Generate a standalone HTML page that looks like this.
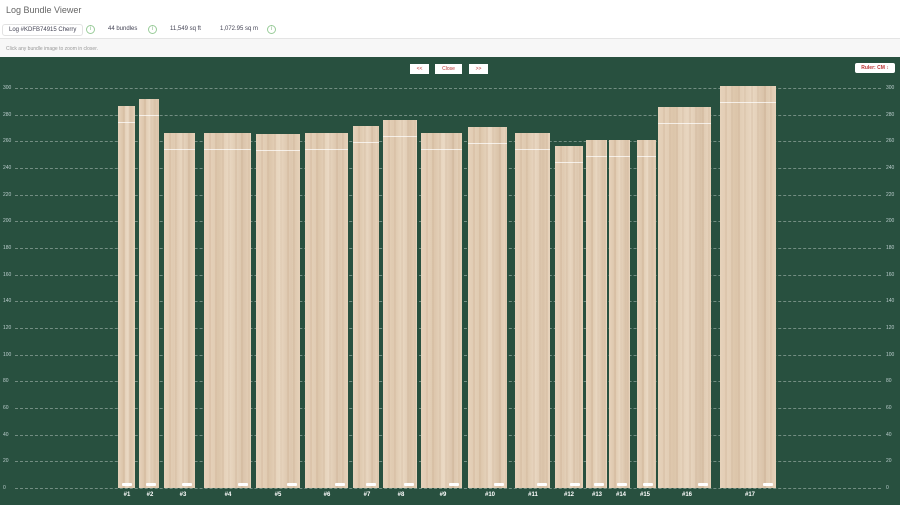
<!DOCTYPE html>
<html><head><meta charset="utf-8"><style>
*{margin:0;padding:0;box-sizing:border-box}
body{width:900px;height:505px;overflow:hidden;background:#fff;font-family:"Liberation Sans",sans-serif;position:relative}
.t{position:absolute;left:6px;top:5px;font-size:9px;color:#666}
.bar{position:absolute;top:22px;left:0;width:900px;height:16px;font-size:6px;color:#445}
.bar span{position:absolute;top:4px}
.ic{position:absolute;top:3px;width:9px;height:9px;border:1px solid #9c9;border-radius:50%;font-size:6px;color:#8b8;text-align:center;line-height:7px}
.hint{position:absolute;top:38px;left:0;width:900px;height:19px;background:#f7f7f7;border-top:1px solid #e4e4e4;font-size:5px;color:#999;padding:7px 6px}
.g{position:absolute;top:57px;left:0;width:900px;height:448px;background:#28503f}
.l{position:absolute;left:15px;width:866px;border-top:1px dashed rgba(255,255,255,.35)}
.a{position:absolute;font-size:5px;color:#bcc}
.p{position:absolute;bottom:17px;background:
repeating-linear-gradient(90deg,rgba(170,130,100,0) 0 5px,rgba(170,130,100,.10) 5px 7px,rgba(255,245,230,.10) 7px 11px,rgba(150,110,80,.06) 11px 13px),
linear-gradient(90deg,#e6d2bb,#dcc5aa 30%,#e8d6c0 55%,#d9c2a8 80%,#e6d2ba)}
.p:before{content:"";position:absolute;left:0;right:0;top:16px;height:1px;background:rgba(255,255,255,.7)}
.p:after{content:"";position:absolute;right:3px;bottom:2px;width:10px;height:3px;background:#fff;border-radius:1px}
.n{position:absolute;top:492px;font-size:6px;color:#fff;font-weight:bold;transform:translateX(-50%)}
.b{position:absolute;top:64px;height:10px;background:#fff;font-size:5px;color:#b33;text-align:center;line-height:10px}
</style></head><body>
<div class="t">Log Bundle Viewer</div>
<div class="bar">
<span style="left:2px;top:2px;border:1px solid #e2e2e2;border-radius:3px;padding:2px 6px">Log #KDFB74915 Cherry</span><div class="ic" style="left:86px">i</div>
<span style="left:108px">44 bundles</span><div class="ic" style="left:148px">i</div>
<span style="left:170px">11,549 sq ft</span>
<span style="left:220px">1,072.95 sq m</span><div class="ic" style="left:267px">i</div>
</div>
<div class="hint">Click any bundle image to zoom in closer.</div>
<div class="g"></div>
<div class="l" style="top:88px"></div><div class="l" style="top:114.7px"></div><div class="l" style="top:141.3px"></div><div class="l" style="top:168px"></div><div class="l" style="top:194.7px"></div><div class="l" style="top:221.3px"></div><div class="l" style="top:248px"></div><div class="l" style="top:274.7px"></div><div class="l" style="top:301.3px"></div><div class="l" style="top:328px"></div><div class="l" style="top:354.7px"></div><div class="l" style="top:381.3px"></div><div class="l" style="top:408px"></div><div class="l" style="top:434.7px"></div><div class="l" style="top:461.3px"></div><div class="l" style="top:488px"></div>
<div class="a" style="left:3px;top:85px">300</div><div class="a" style="left:3px;top:112px">280</div><div class="a" style="left:3px;top:138px">260</div><div class="a" style="left:3px;top:165px">240</div><div class="a" style="left:3px;top:192px">220</div><div class="a" style="left:3px;top:218px">200</div><div class="a" style="left:3px;top:245px">180</div><div class="a" style="left:3px;top:272px">160</div><div class="a" style="left:3px;top:298px">140</div><div class="a" style="left:3px;top:325px">120</div><div class="a" style="left:3px;top:352px">100</div><div class="a" style="left:3px;top:378px">80</div><div class="a" style="left:3px;top:405px">60</div><div class="a" style="left:3px;top:432px">40</div><div class="a" style="left:3px;top:458px">20</div><div class="a" style="left:3px;top:485px">0</div>
<div class="a" style="left:886px;top:85px">300</div><div class="a" style="left:886px;top:112px">280</div><div class="a" style="left:886px;top:138px">260</div><div class="a" style="left:886px;top:165px">240</div><div class="a" style="left:886px;top:192px">220</div><div class="a" style="left:886px;top:218px">200</div><div class="a" style="left:886px;top:245px">180</div><div class="a" style="left:886px;top:272px">160</div><div class="a" style="left:886px;top:298px">140</div><div class="a" style="left:886px;top:325px">120</div><div class="a" style="left:886px;top:352px">100</div><div class="a" style="left:886px;top:378px">80</div><div class="a" style="left:886px;top:405px">60</div><div class="a" style="left:886px;top:432px">40</div><div class="a" style="left:886px;top:458px">20</div><div class="a" style="left:886px;top:485px">0</div>
<div class="b" style="left:410px;width:19px">&lt;&lt;</div>
<div class="b" style="left:435px;width:27px">Close</div>
<div class="b" style="left:469px;width:19px">&gt;&gt;</div>
<div class="b" style="left:855px;top:63px;width:40px;border-radius:2px;font-weight:bold">Ruler: CM ↕</div>
<div class="p" style="left:118px;width:17px;top:106px"></div>
<div class="p" style="left:139px;width:20px;top:99px"></div>
<div class="p" style="left:164px;width:31px;top:133px"></div>
<div class="p" style="left:204px;width:47px;top:133px"></div>
<div class="p" style="left:256px;width:44px;top:134px"></div>
<div class="p" style="left:305px;width:43px;top:133px"></div>
<div class="p" style="left:353px;width:26px;top:126px"></div>
<div class="p" style="left:383px;width:34px;top:120px"></div>
<div class="p" style="left:421px;width:41px;top:133px"></div>
<div class="p" style="left:468px;width:39px;top:127px"></div>
<div class="p" style="left:515px;width:35px;top:133px"></div>
<div class="p" style="left:555px;width:28px;top:146px"></div>
<div class="p" style="left:586px;width:21px;top:140px"></div>
<div class="p" style="left:609px;width:21px;top:140px"></div>
<div class="p" style="left:637px;width:19px;top:140px"></div>
<div class="p" style="left:658px;width:53px;top:107px"></div>
<div class="p" style="left:720px;width:56px;top:86px"></div>
<div class="n" style="left:127px">#1</div><div class="n" style="left:150px">#2</div><div class="n" style="left:183px">#3</div><div class="n" style="left:228px">#4</div><div class="n" style="left:278px">#5</div><div class="n" style="left:327px">#6</div><div class="n" style="left:367px">#7</div><div class="n" style="left:401px">#8</div><div class="n" style="left:443px">#9</div><div class="n" style="left:490px">#10</div><div class="n" style="left:533px">#11</div><div class="n" style="left:569px">#12</div><div class="n" style="left:597px">#13</div><div class="n" style="left:621px">#14</div><div class="n" style="left:645px">#15</div><div class="n" style="left:687px">#16</div><div class="n" style="left:750px">#17</div>
</body></html>
